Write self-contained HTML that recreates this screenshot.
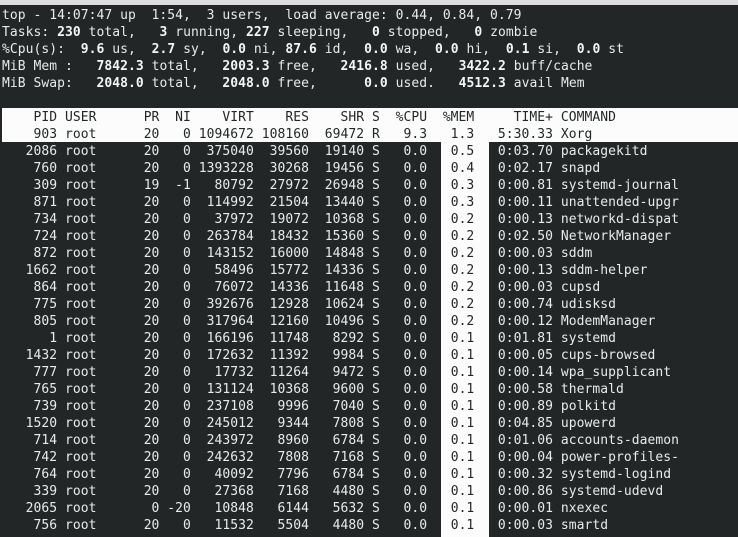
<!DOCTYPE html>
<html><head><meta charset="utf-8"><style>
html,body{margin:0;padding:0;}
body{width:738px;height:537px;background:#232627;position:relative;overflow:hidden;}
.strip{position:absolute;left:0;top:0;width:738px;height:5px;background:#dcdcdc;}
.hl{position:absolute;left:2px;top:108px;width:736px;height:34px;background:#fcfcfc;}
.band{position:absolute;left:441px;top:142px;width:48px;height:395px;background:#fcfcfc;}
pre{position:absolute;left:2px;top:7px;margin:0;font-family:"DejaVu Sans Mono","Liberation Mono",monospace;font-size:13px;line-height:17px;letter-spacing:0.045px;color:#e8eaeb;white-space:pre;}
b{font-weight:bold;color:#f4f5f5;}
.d{color:#232627;}
.m{color:#232627;}
</style></head><body>
<div class="strip"></div>
<div class="hl"></div>
<div class="band"></div>
<pre>top - 14:07:47 up  1:54,  3 users,  load average: 0.44, 0.84, 0.79
Tasks: <b>230</b> total,   <b>3</b> running, <b>227</b> sleeping,   <b>0</b> stopped,   <b>0</b> zombie
%Cpu(s):  <b>9.6</b> us,  <b>2.7</b> sy,  <b>0.0</b> ni, <b>87.6</b> id,  <b>0.0</b> wa,  <b>0.0</b> hi,  <b>0.1</b> si,  <b>0.0</b> st
MiB Mem :   <b>7842.3</b> total,   <b>2003.3</b> free,   <b>2416.8</b> used,   <b>3422.2</b> buff/cache
MiB Swap:   <b>2048.0</b> total,   <b>2048.0</b> free,      <b>0.0</b> used.   <b>4512.3</b> avail Mem

<span class="d">    PID USER      PR  NI    VIRT    RES    SHR S  %CPU  %MEM     TIME+ COMMAND</span>
<span class="d">    903 root      20   0 1094672 108160  69472 R   9.3   1.3   5:30.33 Xorg</span>
   2086 root      20   0  375040  39560  19140 S   0.0<span class="m">   0.5</span>   0:03.70 packagekitd
    760 root      20   0 1393228  30268  19456 S   0.0<span class="m">   0.4</span>   0:02.17 snapd
    309 root      19  -1   80792  27972  26948 S   0.0<span class="m">   0.3</span>   0:00.81 systemd-journal
    871 root      20   0  114992  21504  13440 S   0.0<span class="m">   0.3</span>   0:00.11 unattended-upgr
    734 root      20   0   37972  19072  10368 S   0.0<span class="m">   0.2</span>   0:00.13 networkd-dispat
    724 root      20   0  263784  18432  15360 S   0.0<span class="m">   0.2</span>   0:02.50 NetworkManager
    872 root      20   0  143152  16000  14848 S   0.0<span class="m">   0.2</span>   0:00.03 sddm
   1662 root      20   0   58496  15772  14336 S   0.0<span class="m">   0.2</span>   0:00.13 sddm-helper
    864 root      20   0   76072  14336  11648 S   0.0<span class="m">   0.2</span>   0:00.03 cupsd
    775 root      20   0  392676  12928  10624 S   0.0<span class="m">   0.2</span>   0:00.74 udisksd
    805 root      20   0  317964  12160  10496 S   0.0<span class="m">   0.2</span>   0:00.12 ModemManager
      1 root      20   0  166196  11748   8292 S   0.0<span class="m">   0.1</span>   0:01.81 systemd
   1432 root      20   0  172632  11392   9984 S   0.0<span class="m">   0.1</span>   0:00.05 cups-browsed
    777 root      20   0   17732  11264   9472 S   0.0<span class="m">   0.1</span>   0:00.14 wpa_supplicant
    765 root      20   0  131124  10368   9600 S   0.0<span class="m">   0.1</span>   0:00.58 thermald
    739 root      20   0  237108   9996   7040 S   0.0<span class="m">   0.1</span>   0:00.89 polkitd
   1520 root      20   0  245012   9344   7808 S   0.0<span class="m">   0.1</span>   0:04.85 upowerd
    714 root      20   0  243972   8960   6784 S   0.0<span class="m">   0.1</span>   0:01.06 accounts-daemon
    742 root      20   0  242632   7808   7168 S   0.0<span class="m">   0.1</span>   0:00.04 power-profiles-
    764 root      20   0   40092   7796   6784 S   0.0<span class="m">   0.1</span>   0:00.32 systemd-logind
    339 root      20   0   27368   7168   4480 S   0.0<span class="m">   0.1</span>   0:00.86 systemd-udevd
   2065 root       0 -20   10848   6144   5632 S   0.0<span class="m">   0.1</span>   0:00.01 nxexec
    756 root      20   0   11532   5504   4480 S   0.0<span class="m">   0.1</span>   0:00.03 smartd</pre>
</body></html>
